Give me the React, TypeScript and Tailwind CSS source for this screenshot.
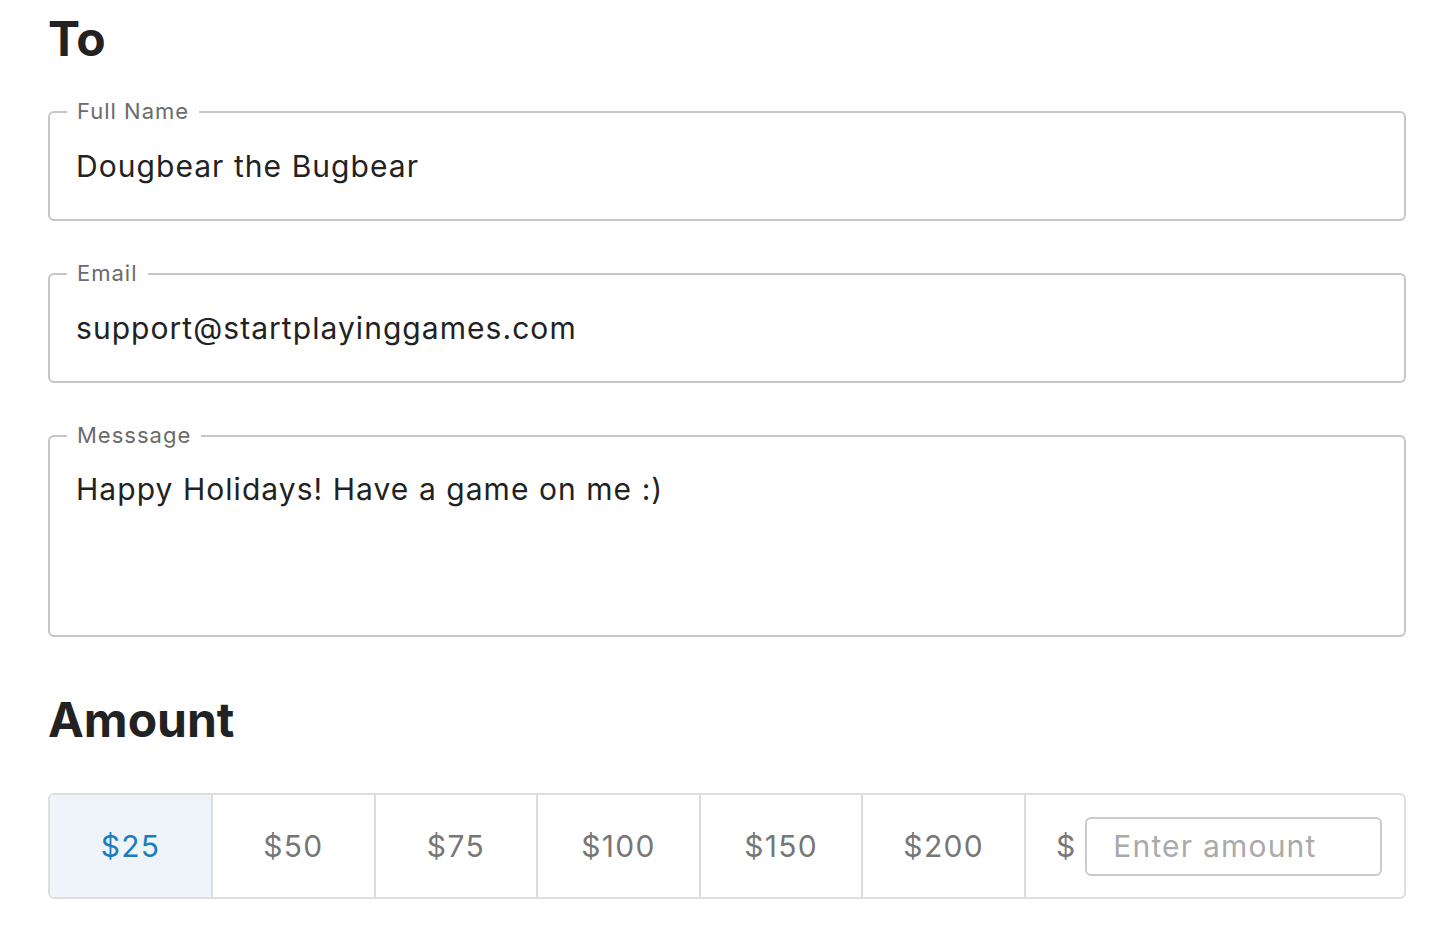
import React from "react";

function Field({ label, value, tall }: { label: string; value: string; tall?: boolean }) {
  return (
    <div
      className={`relative rounded-[6px] border-2 border-[#c6c6c6] ${
        tall ? "h-[202px] items-start pt-[34px]" : "h-[110px] items-center"
      } flex px-[26px]`}
    >
      <span className="absolute left-[17px] top-[-2px] -translate-y-1/2 bg-white px-[10px] text-[22px] leading-[26px] tracking-[1px] text-[#6b6b6b]">
        {label}
      </span>
      <span className="text-[30px] leading-[36px] tracking-[1.05px] text-[#222]">{value}</span>
    </div>
  );
}

export default function App() {
  const amounts = ["$25", "$50", "$75", "$100", "$150", "$200"];
  return (
    <div className="min-h-[930px] bg-white px-[48px] pt-[15px]" style={{ fontFamily: "Inter, 'Noto Sans', sans-serif" }}>
      <h1 className="text-[48px] font-bold leading-[48px] text-[#222]">To</h1>
      <div className="mt-[48px] flex flex-col gap-[52px] w-[1358px]">
        <Field label="Full Name" value="Dougbear the Bugbear" />
        <Field label="Email" value="support@startplayinggames.com" />
        <Field label="Messsage" value="Happy Holidays! Have a game on me :)" tall />
      </div>
      <h2 className="mt-[59px] text-[48px] font-bold leading-[48px] text-[#222]">Amount</h2>
      <div className="mt-[49px] flex h-[106px] w-[1358px] overflow-hidden rounded-[6px] border-2 border-[#dedede]">
        {amounts.map((a, i) => (
          <div
            key={a}
            className={`flex shrink-0 items-center justify-center text-[30px] tracking-[1.3px] ${
              i === 0 ? "w-[161px] bg-[#eef4f9] text-[#1a7dc0]" : "w-[162.6px] border-l-2 border-[#dcdcdc] text-[#777]"
            }`}
          >
            {a}
          </div>
        ))}
        <div className="flex flex-1 items-center border-l-2 border-[#dcdcdc] pl-[30px] pr-[22px]">
          <span className="text-[30px] text-[#777]">$</span>
          <div className="ml-[10px] flex h-[59px] flex-1 items-center rounded-[6px] border-2 border-[#cbcbcb] px-[26px]">
            <span className="text-[30px] tracking-[1.2px] text-[#aaa]">Enter amount</span>
          </div>
        </div>
      </div>
    </div>
  );
}
